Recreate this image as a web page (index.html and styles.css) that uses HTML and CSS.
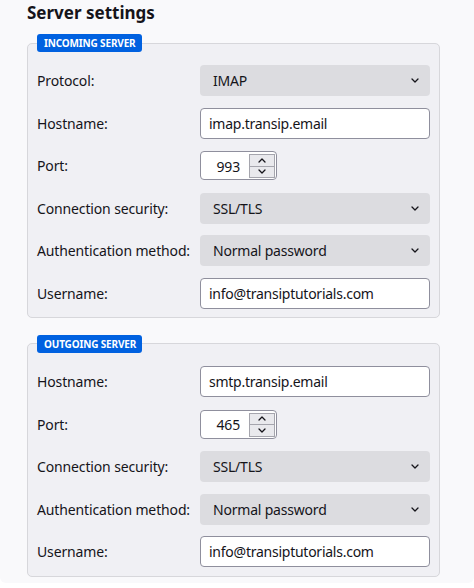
FILE: index.html
```html
<!DOCTYPE html>
<html lang="en">
<head>
<meta charset="utf-8">
<title>Server settings</title>
<link rel="stylesheet" href="styles.css">
</head>
<body>
<div class="page">
  <h1 class="title">Server settings</h1>

  <fieldset class="group">
    <legend class="badge">INCOMING SERVER</legend>
    <div class="rows">
      <label class="lbl">Protocol:</label>
      <div class="select"><span>IMAP</span><svg class="chev" width="8" height="5" viewBox="0 0 8 5"><path d="M1 1l3 3 3-3" fill="none" stroke="#15141a" stroke-width="1.3" stroke-linecap="round" stroke-linejoin="round"/></svg></div>

      <label class="lbl">Hostname:</label>
      <input class="text" type="text" value="imap.transip.email">

      <label class="lbl">Port:</label>
      <div class="ctrl-left">
        <div class="number">
          <input class="num" type="text" value="993">
          <div class="spin">
            <div class="spin-btn"><svg width="8" height="5" viewBox="0 0 8 5"><path d="M1 4l3-3 3 3" fill="none" stroke="#15141a" stroke-width="1.3" stroke-linecap="round" stroke-linejoin="round"/></svg></div>
            <div class="spin-btn"><svg width="8" height="5" viewBox="0 0 8 5"><path d="M1 1l3 3 3-3" fill="none" stroke="#15141a" stroke-width="1.3" stroke-linecap="round" stroke-linejoin="round"/></svg></div>
          </div>
        </div>
      </div>

      <label class="lbl">Connection security:</label>
      <div class="select"><span>SSL/TLS</span><svg class="chev" width="8" height="5" viewBox="0 0 8 5"><path d="M1 1l3 3 3-3" fill="none" stroke="#15141a" stroke-width="1.3" stroke-linecap="round" stroke-linejoin="round"/></svg></div>

      <label class="lbl">Authentication method:</label>
      <div class="select"><span>Normal password</span><svg class="chev" width="8" height="5" viewBox="0 0 8 5"><path d="M1 1l3 3 3-3" fill="none" stroke="#15141a" stroke-width="1.3" stroke-linecap="round" stroke-linejoin="round"/></svg></div>

      <label class="lbl">Username:</label>
      <input class="text" type="text" value="info@transiptutorials.com">
    </div>
  </fieldset>

  <fieldset class="group group-out">
    <legend class="badge">OUTGOING SERVER</legend>
    <div class="rows">
      <label class="lbl">Hostname:</label>
      <input class="text" type="text" value="smtp.transip.email">

      <label class="lbl">Port:</label>
      <div class="ctrl-left">
        <div class="number">
          <input class="num" type="text" value="465">
          <div class="spin">
            <div class="spin-btn"><svg width="8" height="5" viewBox="0 0 8 5"><path d="M1 4l3-3 3 3" fill="none" stroke="#15141a" stroke-width="1.3" stroke-linecap="round" stroke-linejoin="round"/></svg></div>
            <div class="spin-btn"><svg width="8" height="5" viewBox="0 0 8 5"><path d="M1 1l3 3 3-3" fill="none" stroke="#15141a" stroke-width="1.3" stroke-linecap="round" stroke-linejoin="round"/></svg></div>
          </div>
        </div>
      </div>

      <label class="lbl">Connection security:</label>
      <div class="select"><span>SSL/TLS</span><svg class="chev" width="8" height="5" viewBox="0 0 8 5"><path d="M1 1l3 3 3-3" fill="none" stroke="#15141a" stroke-width="1.3" stroke-linecap="round" stroke-linejoin="round"/></svg></div>

      <label class="lbl">Authentication method:</label>
      <div class="select"><span>Normal password</span><svg class="chev" width="8" height="5" viewBox="0 0 8 5"><path d="M1 1l3 3 3-3" fill="none" stroke="#15141a" stroke-width="1.3" stroke-linecap="round" stroke-linejoin="round"/></svg></div>

      <label class="lbl">Username:</label>
      <input class="text" type="text" value="info@transiptutorials.com">
    </div>
  </fieldset>
</div>
</body>
</html>
```

FILE: styles.css
```css
* { box-sizing: border-box; }

html, body {
  margin: 0;
  padding: 0;
  background: #ffffff;
}

body {
  font-family: "Noto Sans", "Open Sans", sans-serif;
  color: #15141a;
}

.page {
  width: 474px;
  height: 583px;
  background: #f9f9fb;
  border-radius: 0 0 6px 6px;
  padding: 2px 0 0 27px;
}

.title {
  margin: 0;
  font-size: 17px;
  line-height: 22px;
  font-weight: 700;
  color: #15141a;
}

.group {
  width: 413px;
  margin: 10px 0 0 0;
  padding: 13px 9px 8px 9px;
  border: 1px solid #d7d7db;
  border-radius: 5px;
  background: #f0f0f4;
}

.group-out {
  margin-top: 17px;
  padding-bottom: 9px;
}

.badge {
  margin: 0;
  padding: 0 6px 0 7px;
  height: 18px;
  line-height: 18px;
  background: #0061e0;
  color: #ffffff;
  font-size: 10px;
  font-weight: 700;
  letter-spacing: -0.15px;
  border-radius: 3px;
}

.rows {
  display: grid;
  grid-template-columns: 163px 230px;
  grid-auto-rows: 31px;
  row-gap: 11.6px;
  align-items: center;
}

.lbl {
  font-size: 14px;
  letter-spacing: -0.14px;
  color: #15141a;
}

.select {
  height: 31px;
  background: #dcdce0;
  border-radius: 4px;
  display: flex;
  align-items: center;
  justify-content: space-between;
  padding: 0 11px 0 13px;
  font-size: 14px;
  letter-spacing: -0.2px;
  color: #15141a;
}

.chev { display: block; }

.text {
  height: 31px;
  width: 230px;
  margin: 0;
  border: 1px solid #8f8f9d;
  border-radius: 4px;
  background: #ffffff;
  padding: 0 8px;
  font-family: "Noto Sans", "Open Sans", sans-serif;
  font-size: 14px;
  letter-spacing: -0.25px;
  color: #15141a;
  outline: none;
}

.ctrl-left {
  display: flex;
  align-items: center;
}

.number {
  width: 77px;
  height: 29px;
  display: flex;
  align-items: stretch;
  border: 1px solid #8f8f9d;
  border-radius: 4px;
  background: #ffffff;
  padding: 2px 1px 1px 0;
}

.num {
  width: 48px;
  border: 0;
  margin: 0;
  padding: 0 9px 0 0;
  background: transparent;
  text-align: right;
  font-family: "Noto Sans", "Open Sans", sans-serif;
  font-size: 14px;
  letter-spacing: -0.2px;
  color: #15141a;
  outline: none;
}

.spin {
  width: 26px;
  display: flex;
  flex-direction: column;
  border: 1px solid #a5a5ad;
  background: #e9e9ed;
}

.spin-btn {
  flex: 1;
  display: flex;
  align-items: center;
  justify-content: center;
}

.spin-btn + .spin-btn {
  border-top: 1px solid #a5a5ad;
}
```
